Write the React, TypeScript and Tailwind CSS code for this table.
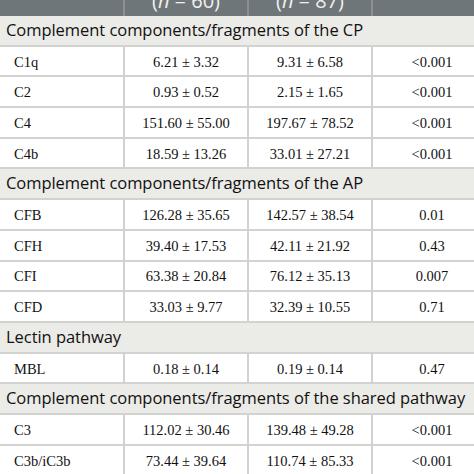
import React from "react";

type Row =
  | { kind: "section"; label: string }
  | { kind: "data"; name: string; a: string; b: string; p: string };

const rows: Row[] = [
  { kind: "section", label: "Complement components/fragments of the CP" },
  { kind: "data", name: "C1q", a: "6.21 ± 3.32", b: "9.31 ± 6.58", p: "<0.001" },
  { kind: "data", name: "C2", a: "0.93 ± 0.52", b: "2.15 ± 1.65", p: "<0.001" },
  { kind: "data", name: "C4", a: "151.60 ± 55.00", b: "197.67 ± 78.52", p: "<0.001" },
  { kind: "data", name: "C4b", a: "18.59 ± 13.26", b: "33.01 ± 27.21", p: "<0.001" },
  { kind: "section", label: "Complement components/fragments of the AP" },
  { kind: "data", name: "CFB", a: "126.28 ± 35.65", b: "142.57 ± 38.54", p: "0.01" },
  { kind: "data", name: "CFH", a: "39.40 ± 17.53", b: "42.11 ± 21.92", p: "0.43" },
  { kind: "data", name: "CFI", a: "63.38 ± 20.84", b: "76.12 ± 35.13", p: "0.007" },
  { kind: "data", name: "CFD", a: "33.03 ± 9.77", b: "32.39 ± 10.55", p: "0.71" },
  { kind: "section", label: "Lectin pathway" },
  { kind: "data", name: "MBL", a: "0.18 ± 0.14", b: "0.19 ± 0.14", p: "0.47" },
  { kind: "section", label: "Complement components/fragments of the shared pathway" },
  { kind: "data", name: "C3", a: "112.02 ± 30.46", b: "139.48 ± 49.28", p: "<0.001" },
  { kind: "data", name: "C3b/iC3b", a: "73.44 ± 39.64", b: "110.74 ± 85.33", p: "<0.001" },
];

const grid = "grid grid-cols-[125px_124px_124px_1fr]";

export default function App() {
  return (
    <div className="w-[474px] h-[474px] overflow-hidden bg-white">
      <div className="w-[491px]">
        <div className={`${grid} h-[16px] bg-[#6f7679] text-[#eef0f0] overflow-hidden`} style={{ fontFamily: "'Open Sans', sans-serif" }}>
          <div className="border-r-2 border-[#8a9093]" />
          <div className="border-r-2 border-[#8a9093] flex justify-center">
            <span className="text-[20px] leading-[20px] -mt-[9px]">(<i>n</i> = 60)</span>
          </div>
          <div className="border-r-2 border-[#8a9093] flex justify-center">
            <span className="text-[20px] leading-[20px] -mt-[9px]">(<i>n</i> = 87)</span>
          </div>
          <div />
        </div>
        {rows.map((r, i) =>
          r.kind === "section" ? (
            <div
              key={i}
              className="h-[30.7px] bg-[#ebebe7] border-b-2 border-[#d2d2d0] flex items-center pl-[6px] text-[16.5px] tracking-[-0.05px] text-[#111111] whitespace-nowrap"
              style={{ fontFamily: "'Open Sans', sans-serif" }}
            >
              {r.label}
            </div>
          ) : (
            <div
              key={i}
              className={`${grid} h-[30.7px] border-b-2 border-[#d2d2d0] text-[14.5px] text-[#111111]`}
              style={{ fontFamily: "'Liberation Serif', serif" }}
            >
              <div className="border-r-2 border-[#d2d2d0] flex items-center pl-[14px] pt-[3px]">{r.name}</div>
              <div className="border-r-2 border-[#d2d2d0] flex items-center justify-center pt-[3px]">{r.a}</div>
              <div className="border-r-2 border-[#d2d2d0] flex items-center justify-center pt-[3px]">{r.b}</div>
              <div className="flex items-center justify-center pt-[3px]">{r.p}</div>
            </div>
          )
        )}
      </div>
    </div>
  );
}
